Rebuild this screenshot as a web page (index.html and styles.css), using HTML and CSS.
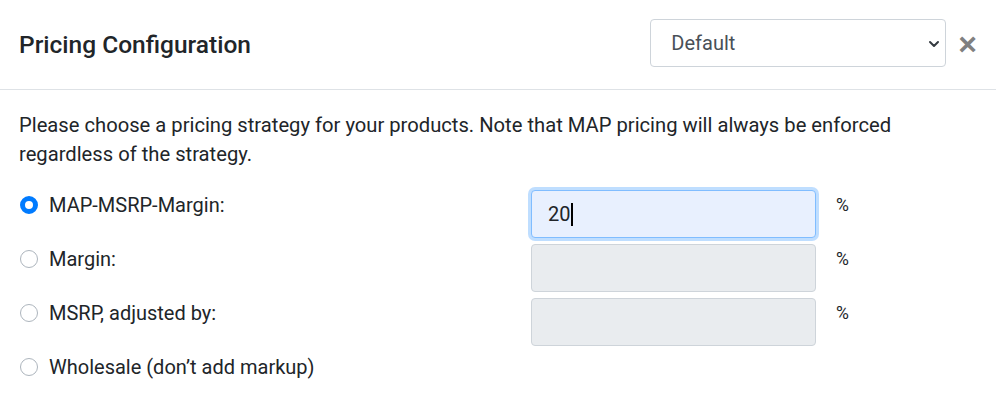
FILE: index.html
```html
<!DOCTYPE html>
<html>
<head>
<meta charset="utf-8">
<link rel="stylesheet" href="styles.css">
</head>
<body>
<div class="modal">
  <div class="modal-header">
    <h5 class="title">Pricing Configuration</h5>
    <div class="header-right">
      <div class="select">
        <span>Default</span>
        <svg class="chev" width="12" height="8" viewBox="0 0 12 8"><path d="M2 2 L6 6 L10 2" fill="none" stroke="#343a40" stroke-width="2" stroke-linecap="round" stroke-linejoin="round"/></svg>
      </div>
      <span class="close">&times;</span>
    </div>
  </div>
  <div class="modal-body">
    <p class="intro">Please choose a pricing strategy for your products. Note that MAP pricing will always be enforced regardless of the strategy.</p>
    <div class="options">
      <div class="row">
        <label class="opt"><span class="radio checked"></span>MAP-MSRP-Margin:</label>
        <div class="input focused"><span>20</span><span class="caret"></span></div>
        <span class="pct">%</span>
      </div>
      <div class="row">
        <label class="opt"><span class="radio"></span>Margin:</label>
        <div class="input disabled"></div>
        <span class="pct">%</span>
      </div>
      <div class="row">
        <label class="opt"><span class="radio"></span>MSRP, adjusted by:</label>
        <div class="input disabled"></div>
        <span class="pct">%</span>
      </div>
      <div class="row">
        <label class="opt"><span class="radio"></span>Wholesale (don’t add markup)</label>
      </div>
    </div>
  </div>
</div>
</body>
</html>
```

FILE: styles.css
```css
* { box-sizing: border-box; }
html, body { margin: 0; padding: 0; background: #fff; }
body {
  font-family: Roboto, "Liberation Sans", sans-serif;
  color: #212529;
  width: 996px;
  height: 403px;
  overflow: hidden;
}
.modal { width: 996px; }
.modal-header {
  height: 90px;
  border-bottom: 1px solid #dee2e6;
  display: flex;
  align-items: center;
  justify-content: space-between;
  padding: 0 19px 0 19px;
}
.title {
  margin: 0;
  font-size: 24.5px;
  font-weight: 500;
  color: #212529;
  padding-bottom: 1px;
}
.header-right {
  display: flex;
  align-items: center;
  gap: 12px;
  margin-top: -3px;
}
.select {
  width: 296px;
  height: 48px;
  border: 1px solid #ced4da;
  border-radius: 4px;
  display: flex;
  align-items: center;
  justify-content: space-between;
  padding: 0 5px 0 20px;
  font-size: 20px;
  color: #495057;
}
.chev { margin-top: 1px; }
.close {
  font-size: 32px;
  font-weight: 700;
  color: #808080;
  line-height: 1;
  font-family: "Liberation Sans", Arial, sans-serif;
  margin-top: 1px;
}
.modal-body { padding: 21px 19px 0 19px; }
.intro {
  margin: 0 0 21px 0;
  font-size: 20.2px;
  line-height: 29px;
  width: 900px;
}
.options { display: flex; flex-direction: column; gap: 6px; }
.row {
  display: flex;
  align-items: flex-start;
  height: 48px;
}
.opt {
  display: flex;
  align-items: center;
  width: 512px;
  font-size: 20px;
  line-height: 30px;
  color: #212529;
}
.radio {
  width: 18px;
  height: 18px;
  border-radius: 50%;
  border: 1px solid #adb5bd;
  margin: 0 11px 0 1px;
  flex: none;
  background: #fff;
}
.radio.checked {
  background: #fff;
  border: 5px solid #007bff;
}
.input {
  width: 285px;
  height: 48px;
  border: 1px solid #ced4da;
  border-radius: 4px;
  font-size: 20px;
  display: flex;
  align-items: center;
  padding-left: 16px;
}
.input.focused {
  background: #e8f0fe;
  border-color: #80bdff;
  box-shadow: 0 0 0 3px rgba(0,123,255,.25);
  color: #212529;
}
.caret {
  display: inline-block;
  width: 2px;
  height: 23px;
  background: #000;
  margin-left: 1px;
}
.input.disabled { background: #e9ecef; }
.pct {
  font-size: 17.6px;
  line-height: 30px;
  margin-left: 20px;
}
```
